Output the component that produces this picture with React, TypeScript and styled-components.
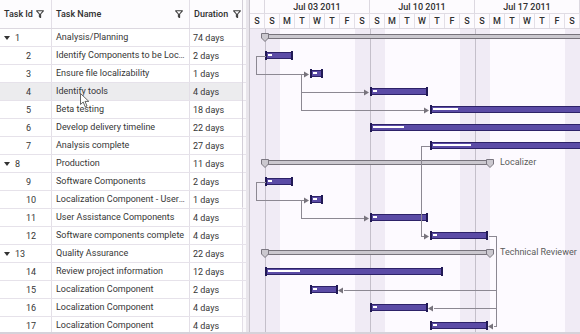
import React from 'react';
import styled, { createGlobalStyle } from 'styled-components';

const DAY = 15;
const ROW = 18;

const GlobalStyle = createGlobalStyle`
  html, body {
    margin: 0;
    padding: 0;
    background: #fdfbfe;
  }
  * {
    box-sizing: border-box;
  }
`;

interface Task {
  id: number;
  name: string;
  duration: string;
  parent?: boolean;
  start: number;
  days: number;
  progress?: number;
  label?: string;
}

const tasks: Task[] = [
  { id: 1, name: 'Analysis/Planning', duration: '74 days', parent: true, start: 1, days: 30 },
  { id: 2, name: 'Identify Components to be Localized', duration: '2 days', start: 1, days: 2, progress: 4 },
  { id: 3, name: 'Ensure file localizability', duration: '1 days', start: 4, days: 1, progress: 4 },
  { id: 4, name: 'Identify tools', duration: '4 days', start: 8, days: 4, progress: 4 },
  { id: 5, name: 'Beta testing', duration: '18 days', start: 12, days: 18, progress: 25 },
  { id: 6, name: 'Develop delivery timeline', duration: '22 days', start: 8, days: 22, progress: 31 },
  { id: 7, name: 'Analysis complete', duration: '27 days', start: 12, days: 27, progress: 38 },
  { id: 8, name: 'Production', duration: '11 days', parent: true, start: 1, days: 15, label: 'Localizer' },
  { id: 9, name: 'Software Components', duration: '2 days', start: 1, days: 2, progress: 4 },
  { id: 10, name: 'Localization Component - User Assistance', duration: '1 days', start: 4, days: 1, progress: 4 },
  { id: 11, name: 'User Assistance Components', duration: '4 days', start: 8, days: 4, progress: 4 },
  { id: 12, name: 'Software components complete', duration: '4 days', start: 12, days: 4, progress: 4 },
  { id: 13, name: 'Quality Assurance', duration: '22 days', parent: true, start: 1, days: 15, label: 'Technical Reviewer' },
  { id: 14, name: 'Review project information', duration: '12 days', start: 1, days: 12, progress: 32 },
  { id: 15, name: 'Localization Component', duration: '2 days', start: 4, days: 2, progress: 4 },
  { id: 16, name: 'Localization Component', duration: '4 days', start: 8, days: 4, progress: 4 },
  { id: 17, name: 'Localization Component', duration: '4 days', start: 12, days: 4, progress: 4 },
];

const dayLetters = 'SSMTWTFSSMTWTFSSMTWTFS'.split('');
const weeks = [
  { label: '', days: 1 },
  { label: 'Jul 03 2011', days: 7 },
  { label: 'Jul 10 2011', days: 7 },
  { label: 'Jul 17 2011', days: 7 },
];

const cy = (i: number) => i * ROW + 9;
const barEnd = (t: Task) => t.start * DAY + t.days * DAY - 2;

const FilterIcon = () => (
  <svg width="8" height="8" viewBox="0 0 8 8">
    <path d="M0.6 0.8 H7.4 L4.6 4 V7.4 L3.4 6.7 V4 Z" fill="none" stroke="#3d3d3d" strokeWidth="1.1" strokeLinejoin="round" />
  </svg>
);

const Marker = () => (
  <svg width="8" height="9" viewBox="0 0 8 9">
    <path d="M0.5 0.5 H7.5 V5 L4 8.5 L0.5 5 Z" fill="#cbc8cf" stroke="#7a7680" />
  </svg>
);

const Cursor = () => (
  <svg width="10" height="15" viewBox="0 0 10 15">
    <path d="M0.5 0.5 V11.5 L3.2 9 L5.2 13.8 L7 13 L5 8.4 H8.8 Z" fill="#fff" stroke="#555" strokeWidth="0.9" strokeLinejoin="round" />
  </svg>
);

const arrowRight = (x: number, y: number) => `${x - 5},${y - 3} ${x},${y} ${x - 5},${y + 3}`;
const arrowLeft = (x: number, y: number) => `${x + 5},${y - 3} ${x},${y} ${x + 5},${y + 3}`;

// dependency lines, in chart coordinates (day * 15, row centre)
const Connectors = () => {
  const paths = [
    `M15 ${cy(1)} H6 V${cy(2)} H55`,
    `M51 ${cy(2)} V${cy(4)} H175 M51 ${cy(3)} H115`,
    `M179 ${cy(6)} H171 V${cy(11)} H175`,
    `M15 ${cy(8)} H6 V${cy(9)} H55`,
    `M51 ${cy(9)} V${cy(10)} H115`,
    `M238 ${cy(11)} H246 V${cy(16)} H243 M246 ${cy(14)} H93 M246 ${cy(15)} H183`,
  ];
  const rights = [arrowRight(59, cy(2)), arrowRight(119, cy(3)), arrowRight(179, cy(4)), arrowRight(179, cy(11)), arrowRight(59, cy(9)), arrowRight(119, cy(10))];
  const lefts = [arrowLeft(88, cy(14)), arrowLeft(178, cy(15)), arrowLeft(238, cy(16))];
  return (
    <ConnectorLayer width="330" height={tasks.length * ROW}>
      {paths.map((d, i) => (
        <path key={i} d={d} fill="none" stroke="#8c8892" strokeWidth="1" shapeRendering="crispEdges" transform="translate(0.5 0.5)" />
      ))}
      {[...rights, ...lefts].map((p, i) => (
        <polygon key={i} points={p} fill="#77737c" transform="translate(0 0.5)" />
      ))}
    </ConnectorLayer>
  );
};

const App = () => {
  return (
    <>
      <GlobalStyle />
      <Page>
        <GridPane>
          <GridHeader>
            <HeadCell $width={52} $padRight={7}>
              Task Id
              <FilterIcon />
            </HeadCell>
            <HeadCell $width={138} $padRight={6}>
              Task Name
              <FilterIcon />
            </HeadCell>
            <HeadCell $width={53} $padRight={1}>
              Duration
              <FilterIcon />
            </HeadCell>
            <Gutter />
          </GridHeader>
          {tasks.map((t) => (
            <GridRow key={t.id} $hover={t.id === 4}>
              <IdCell $parent={t.parent}>
                {t.parent && <Caret />}
                {t.id}
              </IdCell>
              <NameCell>{t.name}</NameCell>
              <DurationCell>{t.duration}</DurationCell>
              <Gutter />
            </GridRow>
          ))}
          <ScrollThumb />
          <CursorSpot>
            <Cursor />
          </CursorSpot>
        </GridPane>
        <Splitter />
        <ChartPane>
          <Timeline>
            <WeekRow>
              {weeks.map((w, i) => (
                <WeekCell key={i} $days={w.days}>
                  {w.label}
                </WeekCell>
              ))}
            </WeekRow>
            <DayRow>
              {dayLetters.map((l, i) => (
                <DayCell key={i}>{l}</DayCell>
              ))}
            </DayRow>
          </Timeline>
          <ChartBody>
            <Backdrop>
              {dayLetters.map((l, i) => (
                <DayColumn key={i} $weekend={l === 'S'} $weekStart={i % 7 === 1} />
              ))}
            </Backdrop>
            {tasks.map((t) => (
              <ChartRow key={t.id}>
                {t.parent ? (
                  <SummaryBar style={{ left: t.start * DAY, width: t.days * DAY }}>
                    <MarkerSpot $side="left">
                      <Marker />
                    </MarkerSpot>
                    {t.label && (
                      <MarkerSpot $side="right">
                        <Marker />
                      </MarkerSpot>
                    )}
                    {t.label && <BarLabel>{t.label}</BarLabel>}
                  </SummaryBar>
                ) : (
                  <TaskBar style={{ left: t.start * DAY, width: barEnd(t) - t.start * DAY }}>
                    <Progress style={{ width: t.progress }} />
                  </TaskBar>
                )}
              </ChartRow>
            ))}
            <Connectors />
          </ChartBody>
        </ChartPane>
      </Page>
    </>
  );
};

const Page = styled.div`
  display: flex;
  width: 580px;
  height: 334px;
  overflow: hidden;
  font-family: Roboto, 'Liberation Sans', sans-serif;
  font-size: 9px;
  color: #333;
  border-bottom: 2px solid #d6d2da;
`;

const GridPane = styled.div`
  position: relative;
  width: 246px;
  flex-shrink: 0;
  background: #fff;
`;

const GridHeader = styled.div`
  display: flex;
  height: 29px;
  border-bottom: 1px solid #dcd8e0;
  background: #fdfcfe;
`;

const HeadCell = styled.div<{ $width: number; $padRight: number }>`
  display: flex;
  align-items: center;
  justify-content: space-between;
  width: ${(p) => p.$width}px;
  padding: 0 ${(p) => p.$padRight}px 0 4px;
  border-right: 1px solid #e3dfe7;
  font-weight: 500;
  color: #2f2f2f;
  white-space: nowrap;
  overflow: hidden;
`;

const Gutter = styled.div`
  width: 3px;
  background: #fbfafc;
`;

const GridRow = styled.div<{ $hover?: boolean }>`
  display: flex;
  height: ${ROW}px;
  border-bottom: 1px solid #e6e2ea;
  background: ${(p) => (p.$hover ? '#ececee' : '#fff')};
`;

const Cell = styled.div`
  display: flex;
  align-items: center;
  border-right: 1px solid #e3dfe7;
  white-space: nowrap;
  overflow: hidden;
  color: #363636;
`;

const IdCell = styled(Cell)<{ $parent?: boolean }>`
  width: 52px;
  padding-left: ${(p) => (p.$parent ? 4 : 26)}px;
  gap: 5px;
`;

const Caret = styled.span`
  width: 0;
  height: 0;
  border-left: 3px solid transparent;
  border-right: 3px solid transparent;
  border-top: 4px solid #333;
`;

const NameCell = styled(Cell)`
  display: block;
  width: 138px;
  padding: 0 3px 0 4px;
  line-height: 17px;
  text-overflow: ellipsis;
`;

const DurationCell = styled(Cell)`
  width: 53px;
  padding-left: 3px;
`;

const ScrollThumb = styled.div`
  position: absolute;
  top: 0;
  left: 242px;
  width: 1px;
  height: 207px;
  background: #d3cfd8;
`;

const CursorSpot = styled.div`
  position: absolute;
  left: 80px;
  top: 93px;
  line-height: 0;
`;

const Splitter = styled.div`
  width: 4px;
  flex-shrink: 0;
  background: #e8e5eb;
  border-right: 1px solid #c9c5cd;
`;

const ChartPane = styled.div`
  flex: 1;
  min-width: 0;
  overflow: hidden;
  background: #fdfaff;
`;

const Timeline = styled.div`
  display: flex;
  flex-direction: column;
  width: ${22 * DAY}px;
  background: #fdfbfe;
  font-weight: 500;
  color: #2f2f2f;
`;

const WeekRow = styled.div`
  display: flex;
  height: 14px;
  border-bottom: 1px solid #e0dce4;
`;

const WeekCell = styled.div<{ $days: number }>`
  display: flex;
  align-items: center;
  justify-content: center;
  width: ${(p) => p.$days * DAY}px;
  border-right: 1px solid #dcd8e0;
  flex-shrink: 0;
`;

const DayRow = styled.div`
  display: flex;
  height: 15px;
  border-bottom: 1px solid #dcd8e0;
`;

const DayCell = styled.div`
  display: flex;
  align-items: center;
  justify-content: center;
  width: ${DAY}px;
  flex-shrink: 0;
  border-right: 1px solid #e3dfe7;
`;

const ChartBody = styled.div`
  position: relative;
  width: ${22 * DAY}px;
`;

const Backdrop = styled.div`
  position: absolute;
  inset: 0;
  display: flex;
`;

const DayColumn = styled.div<{ $weekend: boolean; $weekStart: boolean }>`
  width: ${DAY}px;
  flex-shrink: 0;
  background: ${(p) => (p.$weekend ? '#f0ebf5' : 'transparent')};
  border-left: ${(p) => (p.$weekStart ? '1px solid #c4bfca' : 'none')};
`;

const ChartRow = styled.div`
  position: relative;
  height: ${ROW}px;
`;

const SummaryBar = styled.div`
  position: absolute;
  top: 5px;
  height: 5px;
  background: #cbc8cf;
  border-top: 1px solid #77737c;
  border-bottom: 1px solid #77737c;
`;

const MarkerSpot = styled.div<{ $side: 'left' | 'right' }>`
  position: absolute;
  top: -2px;
  ${(p) => (p.$side === 'left' ? 'left: -4px;' : 'right: -4px;')}
  line-height: 0;
`;

const BarLabel = styled.span`
  position: absolute;
  left: calc(100% + 10px);
  top: -4px;
  white-space: nowrap;
  color: #5a5a5a;
`;

const TaskBar = styled.div`
  position: absolute;
  top: 5px;
  height: 7px;
  background: #5b4ba6;
  border-top: 1px solid #2d2268;
  border-bottom: 1px solid #2d2268;
  &::before,
  &::after {
    content: '';
    position: absolute;
    top: -2px;
    bottom: -2px;
    width: 2px;
    background: #211955;
  }
  &::before {
    left: 0;
  }
  &::after {
    right: 0;
  }
`;

const Progress = styled.div`
  position: absolute;
  left: 3px;
  top: 1px;
  height: 2px;
  background: #fff;
`;

const ConnectorLayer = styled.svg`
  position: absolute;
  left: 0;
  top: 0;
  pointer-events: none;
  overflow: visible;
`;

export default App;
